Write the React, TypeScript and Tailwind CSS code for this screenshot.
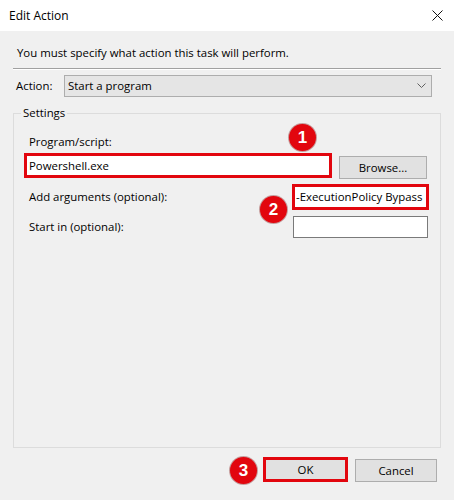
import React from "react";

const FONT = { fontFamily: '"Open Sans", "Noto Sans", "Liberation Sans", sans-serif' };

const Badge = ({ n, className }: { n: string; className: string }) => (
  <div
    className={`absolute w-[27px] h-[27px] rounded-full bg-[#e2060e] text-white font-bold text-[17px] leading-none flex items-center justify-center shadow-[0_0_0_1px_rgba(120,0,0,0.35)] ${className}`}
    style={{ fontFamily: '"Liberation Sans", Arial, sans-serif' }}
  >
    {n}
  </div>
);

export default function App() {
  return (
    <div className="relative w-[454px] h-[500px] flex flex-col text-[11.4px] text-black overflow-hidden" style={FONT}>
      {/* title bar */}
      <div className="h-[31px] bg-white flex items-center justify-between pl-[9px] pr-[11px]">
        <span className="text-[12px]">Edit Action</span>
        <svg width="11" height="11" viewBox="0 0 11 11">
          <path d="M0.5 0.5 L10.5 10.5 M10.5 0.5 L0.5 10.5" stroke="#111" strokeWidth="1" fill="none" />
        </svg>
      </div>

      <div className="flex-1 bg-[#f0f0f0] flex flex-col">
        <p className="mt-[14px] h-4 leading-4 px-[17px]">You must specify what action this task will perform.</p>

        <div className="mt-[7px] mx-[13px] border-t border-t-[#a0a0a0] border-b border-b-white" />

        <div className="mt-[5px] h-[22px] flex items-center pl-4">
          <span className="w-[48px]">Action:</span>
          <div className="w-[368px] h-[22px] bg-[#e5e5e5] border border-[#adadad] flex items-center justify-between pl-[3px] pr-[5px]">
            <span>Start a program</span>
            <svg width="9" height="6" viewBox="0 0 9 6">
              <path d="M0.5 0.5 L4.5 4.5 L8.5 0.5" stroke="#606060" strokeWidth="1" fill="none" />
            </svg>
          </div>
        </div>

        <fieldset className="mt-[8px] mx-[13px] h-[343px] border border-[#dcdcdc]">
          <legend className="ml-[7px] px-[2px] leading-4">Settings</legend>

          <div className="mt-[13px] pl-[15px] leading-4">Program/script:</div>

          <div className="mt-[3px] flex items-start pl-[10px] pr-[13px] gap-[7px]">
            <div className="w-[308px] h-[25px] bg-white border-[3px] border-[#e2060e] flex items-center pl-[2px]">
              Powershell.exe
            </div>
            <button className="mt-[3px] w-[88px] h-[23px] bg-[#e1e1e1] border border-[#adadad]">Browse...</button>
          </div>

          <div className="mt-[5px] flex items-center justify-between pl-[15px] pr-[11px]">
            <span>Add arguments (optional):</span>
            <div className="w-[137px] h-[26px] bg-white border-[3px] border-[#e2060e] flex items-center pl-[1px] whitespace-nowrap overflow-hidden">
              -ExecutionPolicy Bypass
            </div>
          </div>

          <div className="mt-[6px] flex items-center justify-between pl-[15px] pr-[12px]">
            <span>Start in (optional):</span>
            <div className="w-[135px] h-[22px] bg-white border border-[#7a7a7a]" />
          </div>
        </fieldset>

        <div className="mt-[9px] flex items-end justify-end gap-[7px] pr-[17px]">
          <button className="w-[85px] h-[25px] bg-[#e1e1e1] border-[3px] border-[#e2060e]">OK</button>
          <button className="w-[82px] h-[23px] bg-[#e1e1e1] border border-[#adadad]">Cancel</button>
        </div>
      </div>

      <Badge n="1" className="left-[289px] top-[124px]" />
      <Badge n="2" className="left-[260px] top-[196px]" />
      <Badge n="3" className="left-[230px] top-[457px]" />
    </div>
  );
}
